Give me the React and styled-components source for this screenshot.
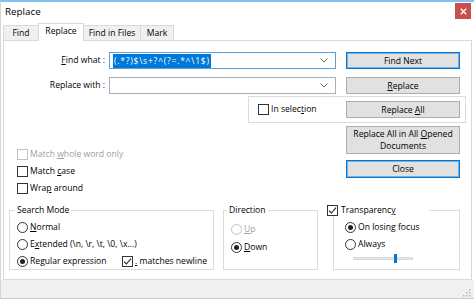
import React from 'react';
import styled, { createGlobalStyle } from 'styled-components';

const GlobalStyle = createGlobalStyle`
  html, body { margin: 0; padding: 0; background: #ffffff; }
  body { font-family: "Open Sans", "Noto Sans", "Liberation Sans", sans-serif; overflow: hidden; }
  *, *::before, *::after { box-sizing: border-box; }
`;

const Window = styled.div`
  width: 474px;
  height: 299px;
  display: flex;
  flex-direction: column;
  background: #ffffff;
  border-top: 2px solid #7ec3ef;
  border-left: 1px solid #d6d6d6;
  border-bottom: 1px solid #c8c8c8;
  font-size: 8.6px;
  line-height: 1.25;
  color: #000;
`;

const TitleBar = styled.div`
  flex: none;
  height: 20px;
  display: flex;
  justify-content: space-between;
  align-items: flex-start;
  padding: 0 3px 0 4px;
`;

const Title = styled.div`
  font-size: 9.8px;
  line-height: 20px;
`;

const CloseButton = styled.div`
  margin-top: 1px;
  width: 16px;
  height: 16px;
  background: #c94f4f;
  display: flex;
  align-items: center;
  justify-content: center;
`;

const TabStrip = styled.div`
  flex: none;
  height: 18px;
  display: flex;
  align-items: flex-end;
  padding-left: 2px;
  position: relative;
  z-index: 1;
`;

const Tab = styled.div`
  width: ${p => p.$w}px;
  height: ${p => (p.$active ? 18 : 15)}px;
  margin-right: -1px;
  margin-bottom: ${p => (p.$active ? -1 : 0)}px;
  border: 1px solid #d9d9d9;
  border-bottom: none;
  background: ${p => (p.$active ? '#ffffff' : '#f0f0f0')};
  display: flex;
  align-items: center;
  justify-content: center;
  position: relative;
  z-index: ${p => (p.$active ? 2 : 1)};
  padding-bottom: ${p => (p.$active ? 2 : 0)}px;
  white-space: nowrap;
`;

const Panel = styled.div`
  flex: none;
  height: 240px;
  margin: 0 2px 0 2px;
  border: 1px solid #d9d9d9;
  background: #ffffff;
  display: flex;
  flex-direction: column;
`;

const FieldRow = styled.div`
  display: flex;
  align-items: center;
  height: 17px;
  margin-top: ${p => p.$mt}px;
`;

const FieldLabel = styled.label`
  width: 101px;
  margin-right: 4px;
  text-align: right;
  white-space: nowrap;
`;

const Combo = styled.div`
  width: 227px;
  height: 17px;
  margin-right: 10px;
  border: 1px solid ${p => (p.$focus ? '#5a9ee0' : '#abadb3')};
  background: #fff;
  display: flex;
  align-items: center;
  padding-left: 3px;
  padding-right: 7px;
`;

const ComboText = styled.div`
  flex: 1;
  height: 100%;
  display: flex;
  align-items: center;
`;

const Selection = styled.span`
  background: #0078d7;
  color: #fff;
  line-height: 14px;
  padding: 0 1px;
  letter-spacing: 0.75px;
  white-space: pre;
`;

const Button = styled.button`
  flex: none;
  width: 114px;
  height: ${p => p.$h || 17}px;
  padding: 0;
  margin: 0;
  font: inherit;
  line-height: 12px;
  color: #000;
  background: #e1e1e1;
  border: 1px solid ${p => (p.$primary ? '#0078d7' : '#adadad')};
  box-shadow: ${p => (p.$primary ? 'inset 0 0 0 1px rgba(0,120,215,0.45)' : 'none')};
`;

const SelectionBox = styled.div`
  margin: 2px 0 0 244px;
  width: 218px;
  height: 27px;
  border: 1px solid #dcdcdc;
  display: flex;
  align-items: center;
  justify-content: space-between;
  padding: 0 5px 0 9px;
`;

const LowerSection = styled.div`
  height: 81px;
  display: flex;
`;

const OptionColumn = styled.div`
  padding: 23px 0 0 13px;
  display: flex;
  flex-direction: column;
`;

const ButtonColumn = styled.div`
  margin-left: auto;
  margin-right: 11px;
  padding-top: 3px;
  display: flex;
  flex-direction: column;
  gap: 6px;
`;

const Option = styled.div`
  display: flex;
  align-items: center;
  gap: 2px;
  height: ${p => p.$h || 17}px;
  width: ${p => (p.$w ? `${p.$w}px` : 'auto')};
  color: ${p => (p.$disabled ? '#a0a0a0' : '#000')};
  white-space: nowrap;
`;

const CheckBox = styled.span`
  flex: none;
  width: 11px;
  height: 11px;
  border: 1px solid ${p => (p.$disabled ? '#c2c2c2' : '#333')};
  background: #fff;
  display: flex;
  align-items: center;
  justify-content: center;
`;

const RadioCircle = styled.span`
  flex: none;
  width: 11px;
  height: 11px;
  border-radius: 50%;
  border: 1px solid ${p => (p.$disabled ? '#c2c2c2' : '#333')};
  background: #fff;
  display: flex;
  align-items: center;
  justify-content: center;
  &::after {
    content: '';
    width: 5px;
    height: 5px;
    border-radius: 50%;
    background: #222;
    display: ${p => (p.$checked ? 'block' : 'none')};
  }
`;

const Acc = styled.span`
  text-decoration: underline;
`;

const GroupsRow = styled.div`
  display: flex;
  margin-left: 5px;
`;

const Group = styled.fieldset`
  margin: 0 0 0 ${p => p.$ml || 0}px;
  padding: 0;
  min-width: 0;
  width: ${p => p.$w}px;
  height: 66px;
  border: 1px solid #dcdcdc;
`;

const Legend = styled.legend`
  margin-left: ${p => p.$ml}px;
  padding: 0 ${p => (p.$pad === undefined ? 2 : p.$pad)}px;
  height: 12px;
  line-height: 12px;
  width: ${p => (p.$w ? `${p.$w}px` : 'auto')};
  display: flex;
  align-items: center;
  gap: 3px;
  white-space: nowrap;
`;

const GroupBody = styled.div`
  padding: ${p => p.$pt}px 0 0 ${p => p.$pl}px;
  display: flex;
  flex-direction: column;
`;

const Row = styled.div`
  display: flex;
  align-items: center;
`;

const SliderTrack = styled.div`
  margin: 4px 0 0 8px;
  width: 60px;
  height: 3px;
  background: #e4e6e7;
  border: 1px solid #d9dbdc;
  position: relative;
`;

const SliderThumb = styled.span`
  position: absolute;
  left: 40px;
  top: -4px;
  width: 3px;
  height: 9px;
  background: #0078d7;
`;

const Footer = styled.div`
  flex: 1;
  background: #f0f0f0;
  display: flex;
  justify-content: flex-end;
  align-items: flex-end;
  padding: 0 3px 1px 0;
`;

const Check = () => (
  <svg width="9" height="9" viewBox="0 0 9 9">
    <polyline points="1,4.6 3.4,7 8,1.6" fill="none" stroke="#222" strokeWidth="1.1" />
  </svg>
);

const Chevron = () => (
  <svg width="8" height="5" viewBox="0 0 8 5">
    <polyline points="0.5,0.5 4,4 7.5,0.5" fill="none" stroke="#6d6d6d" strokeWidth="1" />
  </svg>
);

const CheckOption = ({ checked, disabled, children, w }) => (
  <Option $disabled={disabled} $w={w}>
    <CheckBox $disabled={disabled}>{checked && <Check />}</CheckBox>
    <span>{children}</span>
  </Option>
);

const RadioOption = ({ checked, disabled, children, h, w }) => (
  <Option $disabled={disabled} $h={h} $w={w}>
    <RadioCircle $checked={checked} $disabled={disabled} />
    <span>{children}</span>
  </Option>
);

export default function App() {
  return (
    <>
      <GlobalStyle />
      <Window>
        <TitleBar>
          <Title>Replace</Title>
          <CloseButton>
            <svg width="7" height="7" viewBox="0 0 7 7">
              <path d="M0.8 0.8 L6.2 6.2 M6.2 0.8 L0.8 6.2" stroke="#fff" strokeWidth="1.3" />
            </svg>
          </CloseButton>
        </TitleBar>
        <TabStrip>
          <Tab $w={36}>Find</Tab>
          <Tab $w={46} $active>Replace</Tab>
          <Tab $w={58}>Find in Files</Tab>
          <Tab $w={34}>Mark</Tab>
        </TabStrip>
        <Panel>
          <FieldRow $mt={11}>
            <FieldLabel><Acc>F</Acc>ind what :</FieldLabel>
            <Combo $focus>
              <ComboText>
                <Selection>{'(.*?)$\\s+?^(?=.*^\\1$)'}</Selection>
              </ComboText>
              <Chevron />
            </Combo>
            <Button $primary>Find Next</Button>
          </FieldRow>
          <FieldRow $mt={8}>
            <FieldLabel>Replace with :</FieldLabel>
            <Combo>
              <ComboText />
              <Chevron />
            </Combo>
            <Button><Acc>R</Acc>eplace</Button>
          </FieldRow>
          <SelectionBox>
            <CheckOption>In selec<Acc>t</Acc>ion</CheckOption>
            <Button>Replace <Acc>A</Acc>ll</Button>
          </SelectionBox>
          <LowerSection>
            <OptionColumn>
              <CheckOption disabled>Match <Acc>w</Acc>hole word only</CheckOption>
              <CheckOption>Match <Acc>c</Acc>ase</CheckOption>
              <CheckOption>Wra<Acc>p</Acc> around</CheckOption>
            </OptionColumn>
            <ButtonColumn>
              <Button $h={28}>Replace All in All <Acc>O</Acc>pened<br />Documents</Button>
              <Button $h={18} $primary>Close</Button>
            </ButtonColumn>
          </LowerSection>
          <GroupsRow>
            <Group $w={205}>
              <Legend $ml={5}>Search Mode</Legend>
              <GroupBody $pt={3} $pl={7}>
                <RadioOption><Acc>N</Acc>ormal</RadioOption>
                <RadioOption>E<Acc>x</Acc>tended (\n, \r, \t, \0, \x...)</RadioOption>
                <Row>
                  <RadioOption checked w={105}>Re<Acc>g</Acc>ular expression</RadioOption>
                  <CheckOption checked><Acc>.</Acc> matches newline</CheckOption>
                </Row>
              </GroupBody>
            </Group>
            <Group $w={95} $ml={9}>
              <Legend $ml={3}>Direction</Legend>
              <GroupBody $pt={4} $pl={7}>
                <RadioOption disabled h={18}><Acc>U</Acc>p</RadioOption>
                <RadioOption checked h={18}><Acc>D</Acc>own</RadioOption>
              </GroupBody>
            </Group>
            <Group $w={127} $ml={15}>
              <Legend $ml={-7} $pad={0} $w={102}>
                <CheckBox><Check /></CheckBox>
                <span>Transparenc<Acc>y</Acc></span>
              </Legend>
              <GroupBody $pt={3} $pl={11}>
                <RadioOption checked>On losing focus</RadioOption>
                <RadioOption>Always</RadioOption>
                <SliderTrack>
                  <SliderThumb />
                </SliderTrack>
              </GroupBody>
            </Group>
          </GroupsRow>
        </Panel>
        <Footer>
          <svg width="8" height="8" viewBox="0 0 8 8">
            <g fill="#b4b4b4">
              <rect x="6" y="0" width="1.5" height="1.5" />
              <rect x="6" y="3" width="1.5" height="1.5" />
              <rect x="3" y="3" width="1.5" height="1.5" />
              <rect x="6" y="6" width="1.5" height="1.5" />
              <rect x="3" y="6" width="1.5" height="1.5" />
              <rect x="0" y="6" width="1.5" height="1.5" />
            </g>
          </svg>
        </Footer>
      </Window>
    </>
  );
}
